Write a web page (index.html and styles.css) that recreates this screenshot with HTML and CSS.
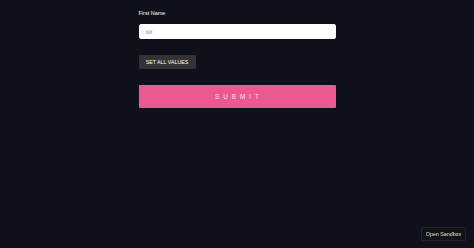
FILE: index.html
```html
<!DOCTYPE html>
<html>
<head>
  <title>Form</title>
  <link rel="stylesheet" href="styles.css">
</head>
<body>
  <form class="form">
    <label for="firstName">First Name</label>
    <input type="text" id="firstName" value="bill">

    <button type="button" class="set-values">Set All Values</button>

    <button type="submit" class="submit">Submit</button>
  </form>

  <a class="sandbox-link" href="#">Open Sandbox</a>
</body>
</html>
```

FILE: styles.css
```css
:root {
  --background: #0e101c;
  --pink: #ec5990;
  --grey: #333333;
  --text: #ffffff;
}

body {
  margin: 0;
  padding-top: 8px;
  font-family: "Liberation Sans", Arial, sans-serif;
  color: var(--text);
  background: var(--background);
}

.form {
  width: 197px;
  margin: 0 auto;
  display: flex;
  flex-direction: column;
  align-items: flex-start;
}

.form label {
  font-size: 5.5px;
  line-height: 11px;
  font-weight: 200;
  color: var(--text);
  margin-bottom: 5px;
}

.form input {
  box-sizing: border-box;
  width: 100%;
  height: 15px;
  padding: 0 6px;
  border: 1px solid #ffffff;
  border-radius: 2px;
  background: #ffffff;
  font-family: inherit;
  font-size: 5.5px;
  color: #8a8a8a;
}

.set-values {
  margin-top: 16px;
  width: 57px;
  height: 14px;
  padding: 0;
  border: none;
  border-radius: 1px;
  background: var(--grey);
  color: var(--text);
  font-family: inherit;
  font-size: 5.3px;
  text-transform: uppercase;
}

.submit {
  margin-top: 16px;
  width: 100%;
  height: 23px;
  padding: 0;
  border: none;
  border-radius: 1px;
  background: var(--pink);
  color: #fbe3ec;
  font-family: inherit;
  font-size: 6.3px;
  font-weight: 100;
  letter-spacing: 4px;
  text-indent: 4px;
  text-transform: uppercase;
}

/* floating link in the corner */
.sandbox-link {
  position: fixed;
  right: 8px;
  bottom: 7px;
  box-sizing: border-box;
  width: 45px;
  height: 14px;
  display: flex;
  align-items: center;
  justify-content: center;
  border: 1px solid rgba(255, 255, 255, 0.08);
  border-radius: 2px;
  background: #121212;
  color: #e6e6e6;
  font-size: 5.3px;
  text-decoration: none;
}
```
